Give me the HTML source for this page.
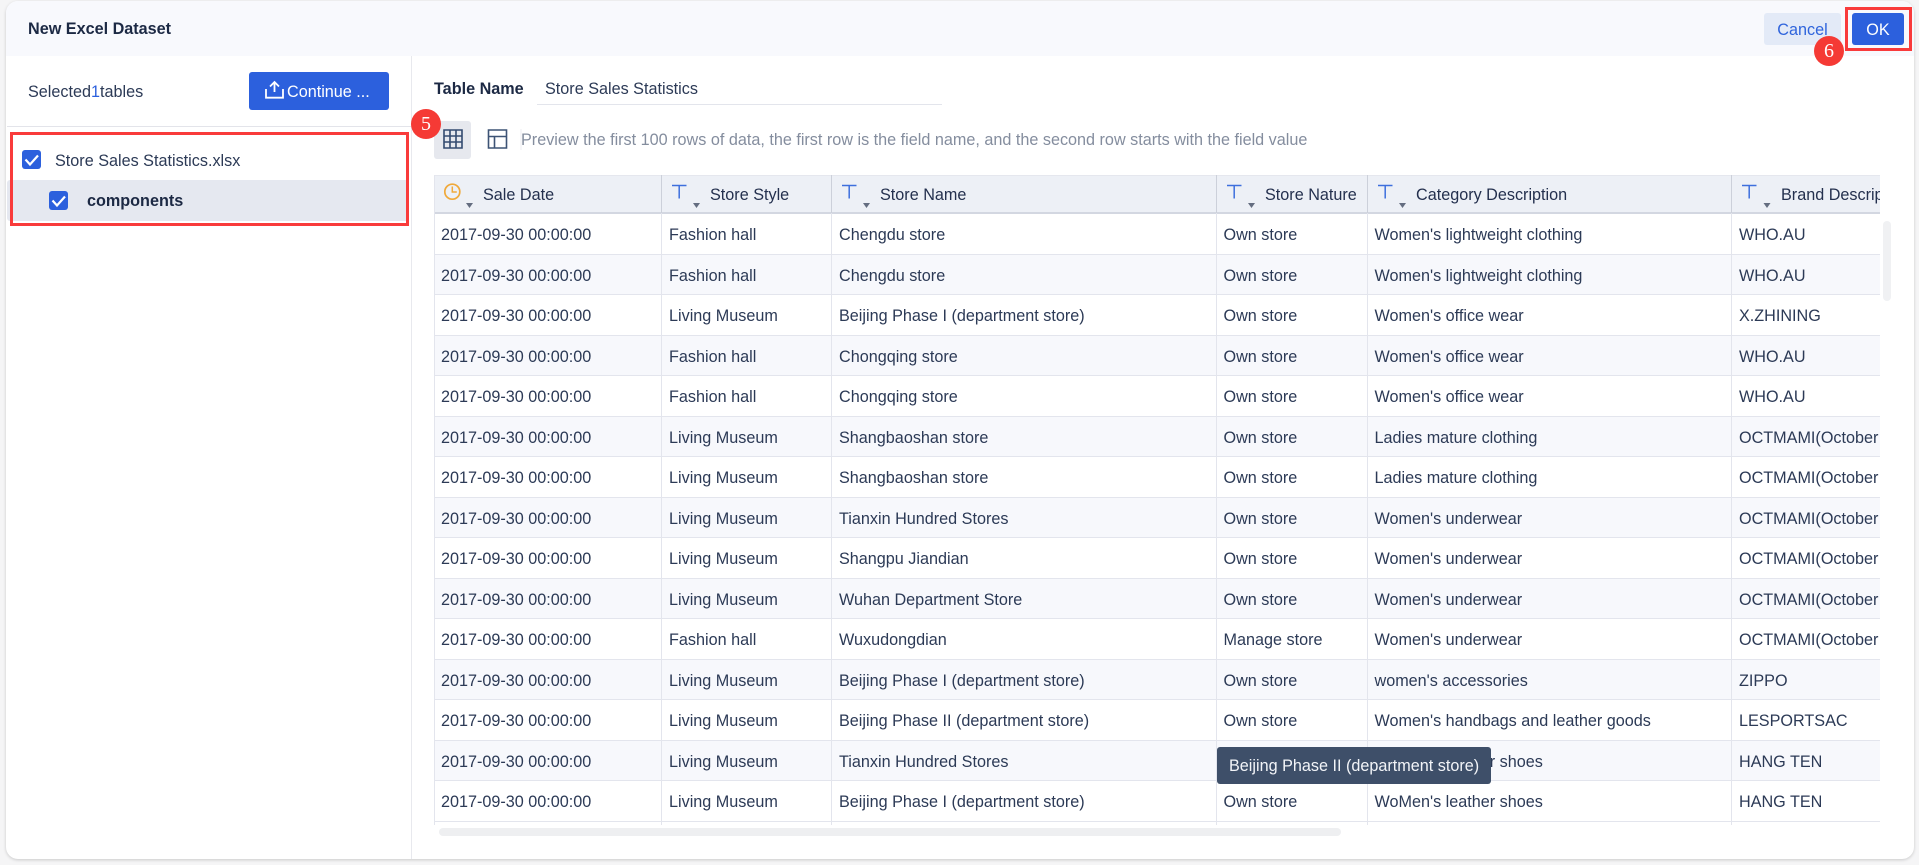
<!DOCTYPE html>
<html><head><meta charset="utf-8"><title>New Excel Dataset</title>
<style>
html,body{margin:0;padding:0;width:1919px;height:865px;overflow:hidden;background:#f5f5f6;font-family:"Liberation Sans",Arial,sans-serif;font-size:16.2px;color:#2c3a56}
body{filter:blur(.3px)}
.a{position:absolute;white-space:nowrap}
#card{position:absolute;left:6px;top:1px;width:1908px;height:858px;background:#fff;border-radius:12px;box-shadow:0 1px 3px rgba(0,0,0,.18);overflow:hidden}
#head{position:absolute;left:0;top:0;width:100%;height:55px;background:#f8f9fd}
.t{line-height:20px;height:20px}
#tbl{position:absolute;left:434px;top:175px;width:1446px;height:650px;overflow:hidden;background:#fff}
.r{position:absolute;left:0;width:1446px;height:40.5px;line-height:40.5px;border-bottom:1px solid #e3e5ed;box-sizing:border-box}
.r:nth-child(even){background:#f7f8fc}
.r span{position:absolute;top:1px;white-space:nowrap}
.r span:nth-child(1),.h span:nth-child(1){left:7px}
.r span:nth-child(2){left:235px}
.r span:nth-child(3){left:405px}
.r span:nth-child(4){left:789.5px}
.r span:nth-child(5){left:940.5px}
.r span:nth-child(6){left:1305px}
.h{position:absolute;left:0;top:0;width:1446px;height:39px;background:#edf0f6;border-top:1px solid #e5e7ee;border-bottom:2px solid #d3d7e1;box-sizing:border-box;color:#24304e}
.h span{position:absolute;top:0;line-height:38px;white-space:nowrap}
.v{position:absolute;top:0;width:1px;height:650px;background:#e3e5ed}
.vh{position:absolute;top:0;width:1px;height:38px;background:#ccd0da}
.red{position:absolute;border:3.5px solid #f93b3b;box-sizing:border-box}
.badge{position:absolute;width:30px;height:30px;border-radius:50%;background:#f53a35;color:#fff;font:20px/30px "Liberation Serif",serif;text-align:center}
</style></head><body>
<div id="card"><div id="head"></div></div>

<div class="a t" style="left:28px;top:19px;font-weight:bold;color:#1c2944">New Excel Dataset</div>
<div class="a" style="left:1764px;top:13px;width:77px;height:32px;line-height:34px;text-align:center;background:#e3eaf7;color:#2f64dc;border-radius:3px">Cancel</div>
<div class="a" style="left:1852px;top:13px;width:52px;height:32px;line-height:34px;text-align:center;background:#2c60dd;color:#fff;border-radius:3px">OK</div>
<div class="red" style="left:1845px;top:7px;width:67px;height:44px"></div>
<div class="badge" style="left:1814px;top:36px">6</div>

<div class="a" style="left:411px;top:56px;width:1px;height:803px;background:#e8e9ee"></div>
<div class="a t" style="left:28px;top:81.5px">Selected<span style="color:#2c60dd">1</span>tables</div>
<div class="a" style="left:249px;top:72px;width:140px;height:38px;background:#2c60dd;border-radius:3px"></div>
<div class="a t" style="left:287px;top:81.5px;color:#fff">Continue ...</div>
<div class="a" style="left:7px;top:126px;width:404px;height:1px;background:#e3e4ea"></div>
<div class="a" style="left:7px;top:180px;width:402px;height:41px;background:#e5e8f0;border-radius:3px 0 0 3px"></div>
<div class="a t" style="left:55px;top:151px">Store Sales Statistics.xlsx</div>
<div class="a t" style="left:87px;top:191px;font-weight:bold;color:#1c2944">components</div>
<div class="red" style="left:10px;top:132px;width:399px;height:94px"></div>

<div class="a t" style="left:434px;top:79px;font-weight:bold;color:#1c2944">Table Name</div>
<div class="a t" style="left:545px;top:79px">Store Sales Statistics</div>
<div class="a" style="left:537px;top:104px;width:405px;height:1px;background:#e3e5ec"></div>
<div class="a" style="left:434px;top:121px;width:37px;height:38px;background:#e6e8ee;border-radius:3px"></div>
<div class="a t" style="left:521px;top:130px;color:#848d9e">Preview the first 100 rows of data, the first row is the field name, and the second row starts with the field value</div>
<div class="badge" style="left:411px;top:109px">5</div>

<div id="tbl">
<div class="h">
<span style="left:49px">Sale Date</span><span style="left:276px">Store Style</span><span style="left:446px">Store Name</span><span style="left:831px">Store Nature</span><span style="left:982px">Category Description</span><span style="left:1347px">Brand Description</span>
</div>
<div id="rows">
<div class="r" style="top:39px"><span>2017-09-30 00:00:00</span><span>Fashion hall</span><span>Chengdu store</span><span>Own store</span><span>Women's lightweight clothing</span><span>WHO.AU</span></div>
<div class="r" style="top:79.5px"><span>2017-09-30 00:00:00</span><span>Fashion hall</span><span>Chengdu store</span><span>Own store</span><span>Women's lightweight clothing</span><span>WHO.AU</span></div>
<div class="r" style="top:120px"><span>2017-09-30 00:00:00</span><span>Living Museum</span><span>Beijing Phase I (department store)</span><span>Own store</span><span>Women's office wear</span><span>X.ZHINING</span></div>
<div class="r" style="top:160.5px"><span>2017-09-30 00:00:00</span><span>Fashion hall</span><span>Chongqing store</span><span>Own store</span><span>Women's office wear</span><span>WHO.AU</span></div>
<div class="r" style="top:201px"><span>2017-09-30 00:00:00</span><span>Fashion hall</span><span>Chongqing store</span><span>Own store</span><span>Women's office wear</span><span>WHO.AU</span></div>
<div class="r" style="top:241.5px"><span>2017-09-30 00:00:00</span><span>Living Museum</span><span>Shangbaoshan store</span><span>Own store</span><span>Ladies mature clothing</span><span>OCTMAMI(October Mommy)</span></div>
<div class="r" style="top:282px"><span>2017-09-30 00:00:00</span><span>Living Museum</span><span>Shangbaoshan store</span><span>Own store</span><span>Ladies mature clothing</span><span>OCTMAMI(October Mommy)</span></div>
<div class="r" style="top:322.5px"><span>2017-09-30 00:00:00</span><span>Living Museum</span><span>Tianxin Hundred Stores</span><span>Own store</span><span>Women's underwear</span><span>OCTMAMI(October Mommy)</span></div>
<div class="r" style="top:363px"><span>2017-09-30 00:00:00</span><span>Living Museum</span><span>Shangpu Jiandian</span><span>Own store</span><span>Women's underwear</span><span>OCTMAMI(October Mommy)</span></div>
<div class="r" style="top:403.5px"><span>2017-09-30 00:00:00</span><span>Living Museum</span><span>Wuhan Department Store</span><span>Own store</span><span>Women's underwear</span><span>OCTMAMI(October Mommy)</span></div>
<div class="r" style="top:444px"><span>2017-09-30 00:00:00</span><span>Fashion hall</span><span>Wuxudongdian</span><span>Manage store</span><span>Women's underwear</span><span>OCTMAMI(October Mommy)</span></div>
<div class="r" style="top:484.5px"><span>2017-09-30 00:00:00</span><span>Living Museum</span><span>Beijing Phase I (department store)</span><span>Own store</span><span>women's accessories</span><span>ZIPPO</span></div>
<div class="r" style="top:525px"><span>2017-09-30 00:00:00</span><span>Living Museum</span><span>Beijing Phase II (department store)</span><span>Own store</span><span>Women's handbags and leather goods</span><span>LESPORTSAC</span></div>
<div class="r" style="top:565.5px"><span>2017-09-30 00:00:00</span><span>Living Museum</span><span>Tianxin Hundred Stores</span><span>Own store</span><span>WoMen's leather shoes</span><span>HANG TEN</span></div>
<div class="r" style="top:606px"><span>2017-09-30 00:00:00</span><span>Living Museum</span><span>Beijing Phase I (department store)</span><span>Own store</span><span>WoMen's leather shoes</span><span>HANG TEN</span></div>
</div>
<i class="v" style="left:0"></i><i class="v" style="left:227px"></i><i class="v" style="left:397px"></i><i class="v" style="left:782px"></i><i class="v" style="left:933px"></i><i class="v" style="left:1297px"></i>
<i class="vh" style="left:227px"></i><i class="vh" style="left:397px"></i><i class="vh" style="left:782px"></i><i class="vh" style="left:933px"></i><i class="vh" style="left:1297px"></i>
</div>

<div class="a" style="left:439px;top:828px;width:902px;height:8px;border-radius:4px;background:#eeeff1"></div>
<div class="a" style="left:1883px;top:221px;width:8px;height:80px;border-radius:4px;background:#f0f1f3"></div>
<div class="a" style="left:1217px;top:747px;width:274px;height:37px;line-height:39px;background:#3e4f69;border-radius:3px;color:#f2f4f8;padding-left:12px;box-sizing:border-box">Beijing Phase II (department store)</div>

<svg class="a" style="left:0;top:0" width="1919" height="865" viewBox="0 0 1919 865" fill="none">
<rect x="22" y="150" width="19" height="19" rx="3" fill="#2c60dd"/>
<path d="M25.500 159.500l4.500 5 8-9" stroke="#fff" stroke-width="2.200"/>
<rect x="49" y="191" width="19" height="19" rx="3" fill="#2c60dd"/>
<path d="M52.500 200.500l4.500 5 8-9" stroke="#fff" stroke-width="2.200"/>
<path d="M266 89v8.700h17V89M274.500 92V82.500M270 86.500l4.500-4.500 4.500 4.500" stroke="#fff" stroke-width="1.800"/>
<path d="M444 130h18v18h-18zM450 130v18M456 130v18M444 136h18M444 142h18" stroke="#334a70" stroke-width="1.600"/>
<path d="M488.500 130h18v18h-18zM488.500 136.500h18M494.500 136.500v11.500" stroke="#3d5375" stroke-width="1.600"/>
<path d="M521 129v21" stroke="#eceef2"/>
<circle cx="452.300" cy="191.700" r="7.500" stroke="#f0a93a" stroke-width="1.700"/>
<path d="M452.300 186.500v5.500h4.500" stroke="#f0a93a" stroke-width="1.500"/>
<g stroke="#3e6fdd" stroke-width="1.500">
<path d="M672 185.500h14.500M679.200 185.500v13"/>
<path d="M842 185.500h14.500M849.200 185.500v13"/>
<path d="M1227 185.500h14.500M1234.200 185.500v13"/>
<path d="M1378 185.500h14.500M1385.200 185.500v13"/>
<path d="M1742 185.500h14.500M1749.200 185.500v13"/>
</g>
<g fill="#646d80">
<path d="M466 203h7l-3.500 5z"/>
<path d="M693 203h7l-3.500 5z"/>
<path d="M863 203h7l-3.500 5z"/>
<path d="M1248 203h7l-3.500 5z"/>
<path d="M1399 203h7l-3.500 5z"/>
<path d="M1763.500 203h7l-3.500 5z"/>
</g>
</svg>
</body></html>
